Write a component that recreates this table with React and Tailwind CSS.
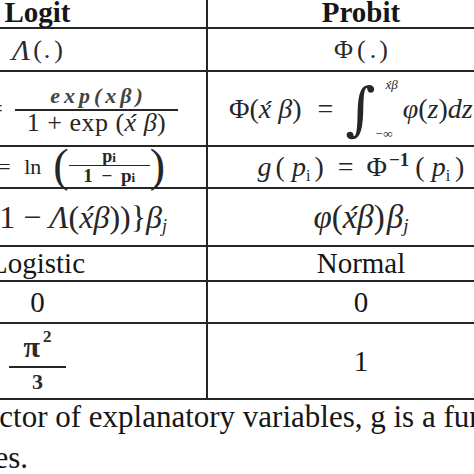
export default function App() {
  return (
    <div className="w-[474px] h-[474px] overflow-hidden bg-white text-[#161616] font-['Liberation_Serif','Times_New_Roman',serif]">
      <div className="-ml-[131px] w-[645px]">
        {/* header */}
        <div className="flex h-[29px] border-b-2 border-[#262626]">
          <div className="w-[339px] shrink-0 border-r-2 border-[#262626] flex justify-center">
            <span className="text-[29px] font-bold leading-[29px] -mt-[2px]">Logit</span>
          </div>
          <div className="w-[306px] shrink-0 flex justify-center">
            <span className="text-[29px] font-bold leading-[29px] -mt-[2px]">Probit</span>
          </div>
        </div>

        {/* link function */}
        <div className="flex h-[43px] border-b-2 border-[#262626]">
          <div className="w-[339px] shrink-0 border-r-2 border-[#262626] flex items-center justify-center">
            <span className="text-[30px] leading-[30px] italic text-[#2a2a2a]">Λ</span>
            <span className="text-[26px] leading-[30px] ml-[3px] text-[#2a2a2a]">(</span>
            <span className="text-[26px] leading-[30px] ml-[2px] text-[#2a2a2a]">.</span>
            <span className="text-[26px] leading-[30px] ml-[4px] text-[#2a2a2a]">)</span>
          </div>
          <div className="w-[306px] shrink-0 flex items-center justify-center">
            <span className="text-[26px] leading-[30px] text-[#2a2a2a]">Φ</span>
            <span className="text-[26px] leading-[30px] ml-[4px] text-[#2a2a2a]">(</span>
            <span className="text-[26px] leading-[30px] ml-[4px] text-[#2a2a2a]">.</span>
            <span className="text-[26px] leading-[30px] ml-[3px] text-[#2a2a2a]">)</span>
          </div>
        </div>

        {/* cdf */}
        <div className="flex h-[75px] border-b-2 border-[#262626]">
          <div className="w-[339px] shrink-0 border-r-2 border-[#262626] flex items-center justify-end pr-[28px] text-[#262626]">
            <span className="text-[26px] leading-[24px] whitespace-nowrap">
              <i>Λ</i>(<i>x́β</i>) =
            </span>
            <span className="inline-flex flex-col items-center w-[163px] ml-[12px]">
              <span className="text-[22px] leading-[26px] italic font-bold tracking-[4px] text-[#444] whitespace-nowrap pl-[4px]">exp(xβ)</span>
              <span className="w-full h-[2px] bg-[#262626]"></span>
              <span className="text-[26px] leading-[24px] whitespace-nowrap tracking-[0.5px]">
                1 + exp (<i>x́</i> <i>β</i>)
              </span>
            </span>
          </div>
          <div className="w-[306px] shrink-0 flex items-center justify-start pl-[21px] text-[#262626]">
            <span className="text-[28px] leading-[28px] whitespace-nowrap">
              Φ(<i>x́</i> <i>β</i>)
            </span>
            <span className="text-[28px] leading-[28px] ml-[16px]">=</span>
            <span className="inline-flex items-stretch ml-[12px] h-[62px]">
              <span className="text-[58px] leading-[62px] italic font-['DejaVu_Serif',serif] font-light">∫</span>
              <span className="flex flex-col justify-between text-[13px] leading-[13px] italic -ml-[1px]">
                <span className="ml-[11px]">x́β</span>
                <span>−∞</span>
              </span>
            </span>
            <span className="text-[28px] leading-[28px] whitespace-nowrap ml-[5px]">
              <i>φ</i>(<i>z</i>)<i>dz</i>
            </span>
          </div>
        </div>

        {/* logit / probit link */}
        <div className="flex h-[42px] border-b-2 border-[#262626]">
          <div className="w-[339px] shrink-0 border-r-2 border-[#262626] flex items-center justify-end pr-[41px] text-[#262626]">
            <span className="text-[22px] leading-[22px] whitespace-nowrap">
              <i>g</i>(<i>p</i><sub className="text-[13px]">i</sub>) = <span className="ml-[8px]">ln</span>
            </span>
            <span className="text-[46px] leading-[40px] font-light ml-[12px] -mt-[2px]">(</span>
            <span className="inline-flex flex-col items-center w-[81px] mt-[2px]">
              <span className="text-[18px] leading-[14px] font-bold">
                p<span className="text-[13px]">i</span>
              </span>
              <span className="w-full h-[1.5px] bg-[#262626]"></span>
              <span className="text-[19px] leading-[19px] font-bold whitespace-nowrap">
                1 <span className="mx-[4px]">−</span> p<span className="text-[13px]">i</span>
              </span>
            </span>
            <span className="text-[46px] leading-[40px] font-light -mt-[2px]">)</span>
          </div>
          <div className="w-[306px] shrink-0 flex items-center justify-center text-[#262626]">
            <span className="flex items-baseline text-[28px] leading-[28px] whitespace-nowrap">
              <i>g</i>
              <span className="ml-[4px]">(</span>
              <i className="ml-[7px]">p</i>
              <span className="text-[16px] leading-[16px] relative top-[5px]">i</span>
              <span className="ml-[4px]">)</span>
              <span className="ml-[14px]">=</span>
              <span className="ml-[13px]">Φ</span>
              <span className="text-[19px] leading-[19px] font-bold ml-[2px] relative -top-[10px]">−1</span>
              <span className="ml-[6px]">(</span>
              <i className="ml-[7px]">p</i>
              <span className="text-[16px] leading-[16px] relative top-[5px]">i</span>
              <span className="ml-[5px]">)</span>
            </span>
          </div>
        </div>

        {/* marginal effect */}
        <div className="flex h-[58px] border-b-2 border-[#262626]">
          <div className="w-[339px] shrink-0 border-r-2 border-[#262626] flex items-center justify-end pr-[39px] text-[#262626]">
            <span className="text-[32px] leading-[31px] whitespace-nowrap">
              <i>Λ</i>(<i>x́β</i>){"{"}1 − <i>Λ</i>(<i>x́β</i>)){"}"}<i>β</i><sub className="text-[18px] italic">j</sub>
            </span>
          </div>
          <div className="w-[306px] shrink-0 flex items-center justify-center text-[#262626]">
            <span className="text-[33px] leading-[31px] whitespace-nowrap">
              <i>φ</i>(<i>x́β</i>)<i className="ml-[2px]">β</i><sub className="text-[19px] italic">j</sub>
            </span>
          </div>
        </div>

        {/* distribution */}
        <div className="flex h-[35px] border-b-2 border-[#262626]">
          <div className="w-[339px] shrink-0 border-r-2 border-[#262626] flex items-center justify-center">
            <span className="text-[29px] leading-[29px]">Logistic</span>
          </div>
          <div className="w-[306px] shrink-0 flex items-center justify-center">
            <span className="text-[29px] leading-[29px]">Normal</span>
          </div>
        </div>

        {/* mean */}
        <div className="flex h-[42px] border-b-2 border-[#262626]">
          <div className="w-[339px] shrink-0 border-r-2 border-[#262626] flex items-center justify-center">
            <span className="text-[29px] leading-[29px]">0</span>
          </div>
          <div className="w-[306px] shrink-0 flex items-center justify-center">
            <span className="text-[29px] leading-[29px]">0</span>
          </div>
        </div>

        {/* variance */}
        <div className="flex h-[76px] border-b-2 border-[#262626]">
          <div className="w-[339px] shrink-0 border-r-2 border-[#262626] flex items-center justify-center">
            <span className="inline-flex flex-col items-center w-[57px] mt-[2px]">
              <span className="h-[34px] flex items-end whitespace-nowrap text-[#2d2a26]">
                <span className="text-[30px] leading-[30px] font-bold">π</span>
                <span className="text-[17px] leading-[17px] font-bold self-start ml-[3px]">2</span>
              </span>
              <span className="w-full h-[2px] bg-[#262626] mt-[4px]"></span>
              <span className="text-[22px] leading-[28px] font-bold text-[#2d2a26]">3</span>
            </span>
          </div>
          <div className="w-[306px] shrink-0 flex items-center justify-center">
            <span className="text-[29px] leading-[29px]">1</span>
          </div>
        </div>
      </div>

      {/* caption */}
      <div className="text-[31px] leading-[41px] -mt-[4px] text-[#161616]">
        <div className="-ml-[30px] whitespace-nowrap">vector of explanatory variables, g is a function of the</div>
        <div className="w-[28px] flex justify-end">
          <span className="shrink-0 whitespace-nowrap">probabilities.</span>
        </div>
      </div>
    </div>
  );
}
